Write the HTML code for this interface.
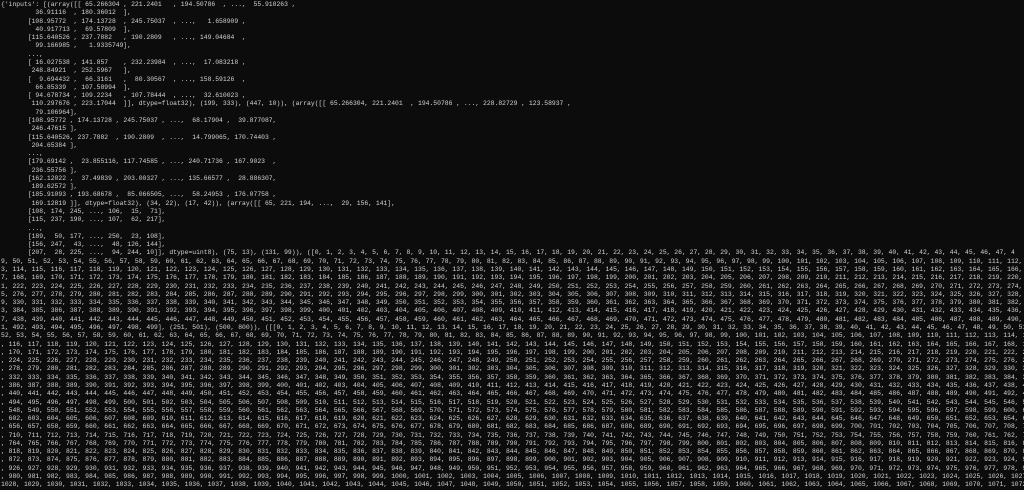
<!DOCTYPE html>
<html><head><meta charset="utf-8"><style>
html,body{margin:0;padding:0;background:#0c0c0c;width:1024px;height:490px;overflow:hidden}
pre{margin:0;padding:1px 0 0 1px;font-family:"Liberation Mono",monospace;font-size:6.38px;line-height:8.28px;color:#d4d4d4;white-space:pre;overflow:hidden;width:1023px;height:489px}
</style></head><body><pre>{'inputs': [(array([[ 65.266304 , 221.2401   , 194.50786  , ...,  55.910263 ,
         36.91116  , 180.36012  ],
       [108.95772  , 174.13728  , 245.75037  , ...,   1.658909 ,
         40.917713 ,  69.57809  ],
       [115.640526 , 237.7882   , 190.2809   , ..., 149.04684  ,
         99.166985 ,   1.9335749],
       ...,
       [ 16.027538 , 141.857    , 232.23984  , ...,  17.083218 ,
        248.84921  , 252.5967   ],
       [  9.694432 ,  66.3161   ,  80.30567  , ..., 158.59126  ,
         66.85339  , 107.58994  ],
       [ 94.678734 , 109.2234   , 107.78444  , ...,  32.610023 ,
        110.297676 , 223.17044  ]], dtype=float32), (199, 333), (447, 10)), (array([[ 65.266304, 221.2401  , 194.50786 , ..., 228.82729 , 123.58937 ,
         79.106964],
       [108.95772 , 174.13728 , 245.75037 , ...,  68.17904 ,  39.877087,
        246.47615 ],
       [115.640526, 237.7882  , 190.2809  , ...,  14.799065, 170.74403 ,
        204.65384 ],
       ...,
       [179.69142 ,  23.855116, 117.74585 , ..., 240.71736 , 167.9023  ,
        236.55756 ],
       [162.12022 ,  37.49839 , 203.00327 , ..., 135.66577 ,  28.886307,
        189.62572 ],
       [185.91093 , 193.68678 ,  85.066505, ...,  58.24953 , 176.07758 ,
        169.12819 ]], dtype=float32), (34, 22), (17, 42)), (array([[ 65, 221, 194, ...,  29, 156, 141],
       [108, 174, 245, ..., 106,  15,  71],
       [115, 237, 190, ..., 107,  62, 217],
       ...,
       [189,  50, 177, ..., 250,  23, 108],
       [156, 247,  43, ...,  48, 126, 144],
       [207,  28, 225, ...,  94, 244, 10]], dtype=uint8), (75, 13), (131, 99)), ([0, 1, 2, 3, 4, 5, 6, 7, 8, 9, 10, 11, 12, 13, 14, 15, 16, 17, 18, 19, 20, 21, 22, 23, 24, 25, 26, 27, 28, 29, 30, 31, 32, 33, 34, 35, 36, 37, 38, 39, 40, 41, 42, 43, 44, 45, 46, 47, 4
9, 50, 51, 52, 53, 54, 55, 56, 57, 58, 59, 60, 61, 62, 63, 64, 65, 66, 67, 68, 69, 70, 71, 72, 73, 74, 75, 76, 77, 78, 79, 80, 81, 82, 83, 84, 85, 86, 87, 88, 89, 90, 91, 92, 93, 94, 95, 96, 97, 98, 99, 100, 101, 102, 103, 104, 105, 106, 107, 108, 109, 110, 111, 112, 11
3, 114, 115, 116, 117, 118, 119, 120, 121, 122, 123, 124, 125, 126, 127, 128, 129, 130, 131, 132, 133, 134, 135, 136, 137, 138, 139, 140, 141, 142, 143, 144, 145, 146, 147, 148, 149, 150, 151, 152, 153, 154, 155, 156, 157, 158, 159, 160, 161, 162, 163, 164, 165, 166, 16
7, 168, 169, 170, 171, 172, 173, 174, 175, 176, 177, 178, 179, 180, 181, 182, 183, 184, 185, 186, 187, 188, 189, 190, 191, 192, 193, 194, 195, 196, 197, 198, 199, 200, 201, 202, 203, 204, 205, 206, 207, 208, 209, 210, 211, 212, 213, 214, 215, 216, 217, 218, 219, 220, 22
1, 222, 223, 224, 225, 226, 227, 228, 229, 230, 231, 232, 233, 234, 235, 236, 237, 238, 239, 240, 241, 242, 243, 244, 245, 246, 247, 248, 249, 250, 251, 252, 253, 254, 255, 256, 257, 258, 259, 260, 261, 262, 263, 264, 265, 266, 267, 268, 269, 270, 271, 272, 273, 274, 27
5, 276, 277, 278, 279, 280, 281, 282, 283, 284, 285, 286, 287, 288, 289, 290, 291, 292, 293, 294, 295, 296, 297, 298, 299, 300, 301, 302, 303, 304, 305, 306, 307, 308, 309, 310, 311, 312, 313, 314, 315, 316, 317, 318, 319, 320, 321, 322, 323, 324, 325, 326, 327, 328, 32
9, 330, 331, 332, 333, 334, 335, 336, 337, 338, 339, 340, 341, 342, 343, 344, 345, 346, 347, 348, 349, 350, 351, 352, 353, 354, 355, 356, 357, 358, 359, 360, 361, 362, 363, 364, 365, 366, 367, 368, 369, 370, 371, 372, 373, 374, 375, 376, 377, 378, 379, 380, 381, 382, 38
3, 384, 385, 386, 387, 388, 389, 390, 391, 392, 393, 394, 395, 396, 397, 398, 399, 400, 401, 402, 403, 404, 405, 406, 407, 408, 409, 410, 411, 412, 413, 414, 415, 416, 417, 418, 419, 420, 421, 422, 423, 424, 425, 426, 427, 428, 429, 430, 431, 432, 433, 434, 435, 436, 43
7, 438, 439, 440, 441, 442, 443, 444, 445, 446, 447, 448, 449, 450, 451, 452, 453, 454, 455, 456, 457, 458, 459, 460, 461, 462, 463, 464, 465, 466, 467, 468, 469, 470, 471, 472, 473, 474, 475, 476, 477, 478, 479, 480, 481, 482, 483, 484, 485, 486, 487, 488, 489, 490, 49
1, 492, 493, 494, 495, 496, 497, 498, 499], (251, 501), (500, 800)), ([[0, 1, 2, 3, 4, 5, 6, 7, 8, 9, 10, 11, 12, 13, 14, 15, 16, 17, 18, 19, 20, 21, 22, 23, 24, 25, 26, 27, 28, 29, 30, 31, 32, 33, 34, 35, 36, 37, 38, 39, 40, 41, 42, 43, 44, 45, 46, 47, 48, 49, 50, 51, 
52, 53, 54, 55, 56, 57, 58, 59, 60, 61, 62, 63, 64, 65, 66, 67, 68, 69, 70, 71, 72, 73, 74, 75, 76, 77, 78, 79, 80, 81, 82, 83, 84, 85, 86, 87, 88, 89, 90, 91, 92, 93, 94, 95, 96, 97, 98, 99, 100, 101, 102, 103, 104, 105, 106, 107, 108, 109, 110, 111, 112, 113, 114, 115
, 116, 117, 118, 119, 120, 121, 122, 123, 124, 125, 126, 127, 128, 129, 130, 131, 132, 133, 134, 135, 136, 137, 138, 139, 140, 141, 142, 143, 144, 145, 146, 147, 148, 149, 150, 151, 152, 153, 154, 155, 156, 157, 158, 159, 160, 161, 162, 163, 164, 165, 166, 167, 168, 169
, 170, 171, 172, 173, 174, 175, 176, 177, 178, 179, 180, 181, 182, 183, 184, 185, 186, 187, 188, 189, 190, 191, 192, 193, 194, 195, 196, 197, 198, 199, 200, 201, 202, 203, 204, 205, 206, 207, 208, 209, 210, 211, 212, 213, 214, 215, 216, 217, 218, 219, 220, 221, 222, 223
, 224, 225, 226, 227, 228, 229, 230, 231, 232, 233, 234, 235, 236, 237, 238, 239, 240, 241, 242, 243, 244, 245, 246, 247, 248, 249, 250, 251, 252, 253, 254, 255, 256, 257, 258, 259, 260, 261, 262, 263, 264, 265, 266, 267, 268, 269, 270, 271, 272, 273, 274, 275, 276, 277
, 278, 279, 280, 281, 282, 283, 284, 285, 286, 287, 288, 289, 290, 291, 292, 293, 294, 295, 296, 297, 298, 299, 300, 301, 302, 303, 304, 305, 306, 307, 308, 309, 310, 311, 312, 313, 314, 315, 316, 317, 318, 319, 320, 321, 322, 323, 324, 325, 326, 327, 328, 329, 330, 331
, 332, 333, 334, 335, 336, 337, 338, 339, 340, 341, 342, 343, 344, 345, 346, 347, 348, 349, 350, 351, 352, 353, 354, 355, 356, 357, 358, 359, 360, 361, 362, 363, 364, 365, 366, 367, 368, 369, 370, 371, 372, 373, 374, 375, 376, 377, 378, 379, 380, 381, 382, 383, 384, 385
, 386, 387, 388, 389, 390, 391, 392, 393, 394, 395, 396, 397, 398, 399, 400, 401, 402, 403, 404, 405, 406, 407, 408, 409, 410, 411, 412, 413, 414, 415, 416, 417, 418, 419, 420, 421, 422, 423, 424, 425, 426, 427, 428, 429, 430, 431, 432, 433, 434, 435, 436, 437, 438, 439
, 440, 441, 442, 443, 444, 445, 446, 447, 448, 449, 450, 451, 452, 453, 454, 455, 456, 457, 458, 459, 460, 461, 462, 463, 464, 465, 466, 467, 468, 469, 470, 471, 472, 473, 474, 475, 476, 477, 478, 479, 480, 481, 482, 483, 484, 485, 486, 487, 488, 489, 490, 491, 492, 493
, 494, 495, 496, 497, 498, 499, 500, 501, 502, 503, 504, 505, 506, 507, 508, 509, 510, 511, 512, 513, 514, 515, 516, 517, 518, 519, 520, 521, 522, 523, 524, 525, 526, 527, 528, 529, 530, 531, 532, 533, 534, 535, 536, 537, 538, 539, 540, 541, 542, 543, 544, 545, 546, 547
, 548, 549, 550, 551, 552, 553, 554, 555, 556, 557, 558, 559, 560, 561, 562, 563, 564, 565, 566, 567, 568, 569, 570, 571, 572, 573, 574, 575, 576, 577, 578, 579, 580, 581, 582, 583, 584, 585, 586, 587, 588, 589, 590, 591, 592, 593, 594, 595, 596, 597, 598, 599, 600, 601
, 602, 603, 604, 605, 606, 607, 608, 609, 610, 611, 612, 613, 614, 615, 616, 617, 618, 619, 620, 621, 622, 623, 624, 625, 626, 627, 628, 629, 630, 631, 632, 633, 634, 635, 636, 637, 638, 639, 640, 641, 642, 643, 644, 645, 646, 647, 648, 649, 650, 651, 652, 653, 654, 655
, 656, 657, 658, 659, 660, 661, 662, 663, 664, 665, 666, 667, 668, 669, 670, 671, 672, 673, 674, 675, 676, 677, 678, 679, 680, 681, 682, 683, 684, 685, 686, 687, 688, 689, 690, 691, 692, 693, 694, 695, 696, 697, 698, 699, 700, 701, 702, 703, 704, 705, 706, 707, 708, 709
, 710, 711, 712, 713, 714, 715, 716, 717, 718, 719, 720, 721, 722, 723, 724, 725, 726, 727, 728, 729, 730, 731, 732, 733, 734, 735, 736, 737, 738, 739, 740, 741, 742, 743, 744, 745, 746, 747, 748, 749, 750, 751, 752, 753, 754, 755, 756, 757, 758, 759, 760, 761, 762, 763
, 764, 765, 766, 767, 768, 769, 770, 771, 772, 773, 774, 775, 776, 777, 778, 779, 780, 781, 782, 783, 784, 785, 786, 787, 788, 789, 790, 791, 792, 793, 794, 795, 796, 797, 798, 799, 800, 801, 802, 803, 804, 805, 806, 807, 808, 809, 810, 811, 812, 813, 814, 815, 816, 817
, 818, 819, 820, 821, 822, 823, 824, 825, 826, 827, 828, 829, 830, 831, 832, 833, 834, 835, 836, 837, 838, 839, 840, 841, 842, 843, 844, 845, 846, 847, 848, 849, 850, 851, 852, 853, 854, 855, 856, 857, 858, 859, 860, 861, 862, 863, 864, 865, 866, 867, 868, 869, 870, 871
, 872, 873, 874, 875, 876, 877, 878, 879, 880, 881, 882, 883, 884, 885, 886, 887, 888, 889, 890, 891, 892, 893, 894, 895, 896, 897, 898, 899, 900, 901, 902, 903, 904, 905, 906, 907, 908, 909, 910, 911, 912, 913, 914, 915, 916, 917, 918, 919, 920, 921, 922, 923, 924, 925
, 926, 927, 928, 929, 930, 931, 932, 933, 934, 935, 936, 937, 938, 939, 940, 941, 942, 943, 944, 945, 946, 947, 948, 949, 950, 951, 952, 953, 954, 955, 956, 957, 958, 959, 960, 961, 962, 963, 964, 965, 966, 967, 968, 969, 970, 971, 972, 973, 974, 975, 976, 977, 978, 979
, 980, 981, 982, 983, 984, 985, 986, 987, 988, 989, 990, 991, 992, 993, 994, 995, 996, 997, 998, 999, 1000, 1001, 1002, 1003, 1004, 1005, 1006, 1007, 1008, 1009, 1010, 1011, 1012, 1013, 1014, 1015, 1016, 1017, 1018, 1019, 1020, 1021, 1022, 1023, 1024, 1025, 1026, 1027, 
1028, 1029, 1030, 1031, 1032, 1033, 1034, 1035, 1036, 1037, 1038, 1039, 1040, 1041, 1042, 1043, 1044, 1045, 1046, 1047, 1048, 1049, 1050, 1051, 1052, 1053, 1054, 1055, 1056, 1057, 1058, 1059, 1060, 1061, 1062, 1063, 1064, 1065, 1066, 1067, 1068, 1069, 1070, 1071, 1072, 
1073, 1074, 1075, 1076, 1077, 1078, 1079, 1080, 1081, 1082, 1083, 1084, 1085, 1086, 1087, 1088, 1089, 1090, 1091, 1092, 1093, 1094, 1095, 1096, 1097, 1098, 1099, 1100, 1101, 1102, 1103, 1104, 1105, 1106, 1107, 1108, 1109, 1110, 1111, 1112, 1113, 1114, 1115, 1116, 1117, </pre></body></html>
